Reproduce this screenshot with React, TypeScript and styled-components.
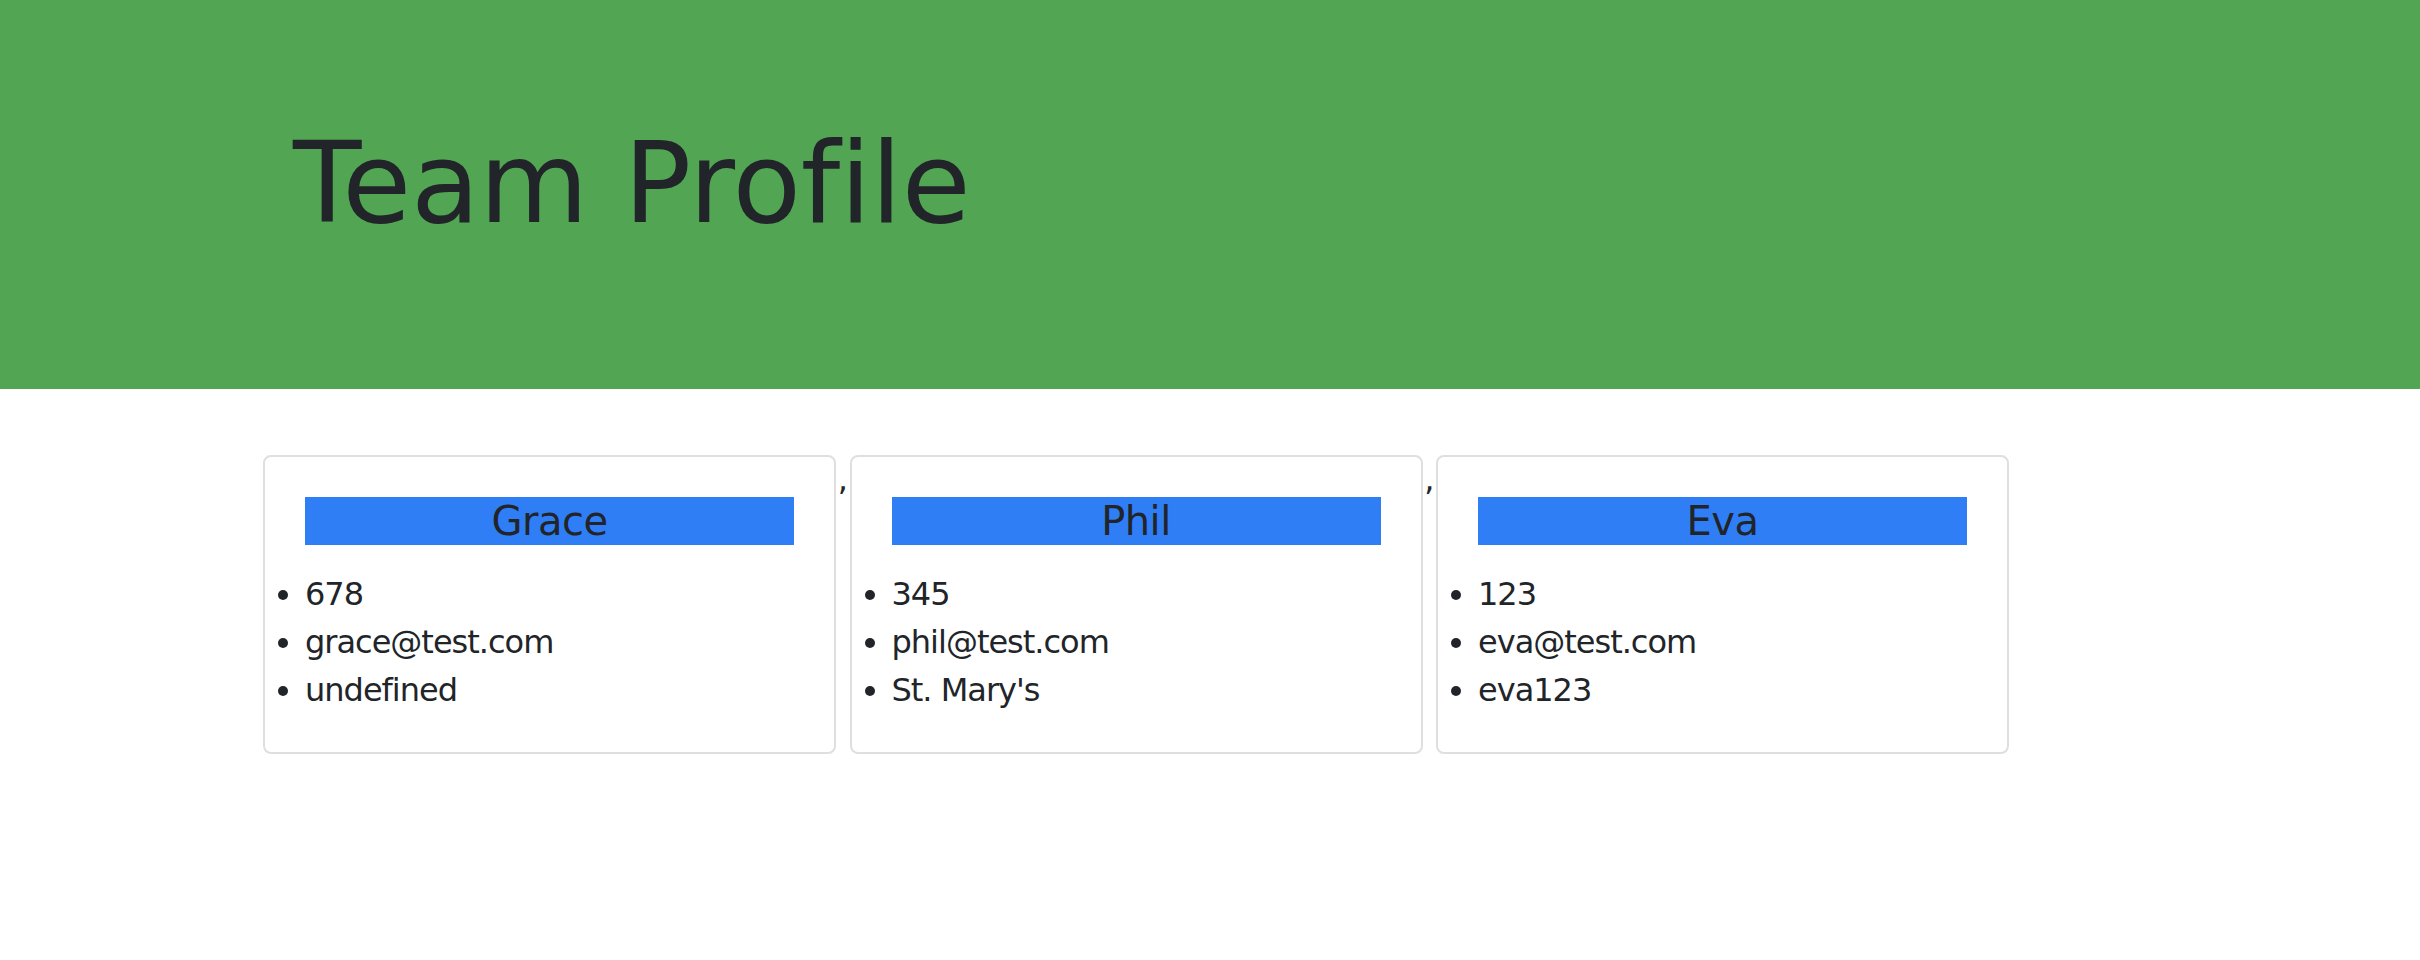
import React from 'react';
import styled, { createGlobalStyle } from 'styled-components';

type Member = {
  name: string;
  id: string;
  email: string;
  extra?: string;
};

const team: Member[] = [
  { name: 'Grace', id: '678', email: 'grace@test.com' },
  { name: 'Phil', id: '345', email: 'phil@test.com', extra: "St. Mary's" },
  { name: 'Eva', id: '123', email: 'eva@test.com', extra: 'eva123' },
];

const GlobalStyle = createGlobalStyle`
  html, body {
    margin: 0;
    padding: 0;
    background: #ffffff;
  }

  body {
    font-family: "DejaVu Sans", Verdana, sans-serif;
    color: #212529;
  }
`;

const Jumbotron = styled.header`
  background: #52a552;
  padding: 116px 0 139px 293px;
`;

const Title = styled.h1`
  margin: 0;
  font-size: 112px;
  font-weight: 400;
  line-height: 1.2;
  letter-spacing: -0.2px;
  color: #212529;
`;

const CardRow = styled.main`
  display: flex;
  align-items: flex-start;
  margin-top: 66px;
  padding-left: 263px;
`;

const Separator = styled.span`
  width: 13.5px;
  text-align: center;
  font-size: 32px;
  line-height: 48px;
`;

const Card = styled.section`
  box-sizing: border-box;
  width: 573px;
  flex-shrink: 0;
  border: 2px solid #dfdfdf;
  border-radius: 8px;
  padding: 40px 40px 38px;
  background: #ffffff;
`;

const NameBar = styled.h5`
  margin: 0;
  background: #2f7ef6;
  font-size: 40px;
  font-weight: 400;
  line-height: 48px;
  text-align: center;
  letter-spacing: -0.5px;
`;

const DetailList = styled.ul`
  margin: 25px 0 0;
  padding: 0;
  list-style: disc outside;
  font-size: 32px;
  line-height: 48px;
  letter-spacing: -1px;
`;

const ProfileCard: React.FC<{ member: Member }> = ({ member }) => (
  <Card>
    <NameBar>{member.name}</NameBar>
    <DetailList>
      <li>{member.id}</li>
      <li>{member.email}</li>
      <li>{member.extra ?? 'undefined'}</li>
    </DetailList>
  </Card>
);

const App: React.FC = () => {
  return (
    <>
      <GlobalStyle />
      <Jumbotron>
        <Title>Team Profile</Title>
      </Jumbotron>
      <CardRow>
        {team.map((member, i) => (
          <React.Fragment key={member.name}>
            {i > 0 && <Separator>,</Separator>}
            <ProfileCard member={member} />
          </React.Fragment>
        ))}
      </CardRow>
    </>
  );
};

export default App;
